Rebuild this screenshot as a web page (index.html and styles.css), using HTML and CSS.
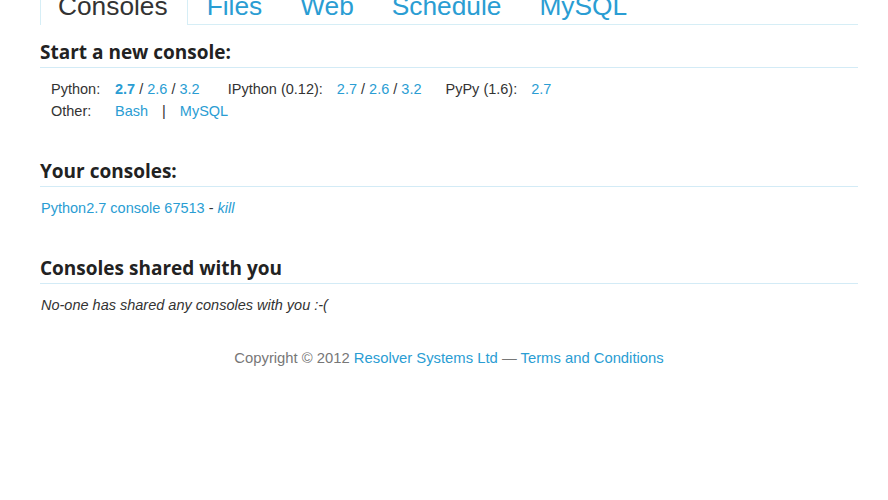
FILE: index.html
```html
<!DOCTYPE html>
<html>
<head>
<meta charset="utf-8">
<title>Consoles</title>
<link rel="stylesheet" href="styles.css">
</head>
<body>
<div class="page">
  <ul class="tabs">
    <li class="tab active">Consoles</li>
    <li class="tab"><a href="#">Files</a></li>
    <li class="tab"><a href="#">Web</a></li>
    <li class="tab"><a href="#">Schedule</a></li>
    <li class="tab"><a href="#">MySQL</a></li>
  </ul>

  <h2 class="section-title first">Start a new console:</h2>
  <div class="launch">
    <div class="launch-row">
      <span class="lbl lbl-python">Python:</span>
      <span class="vals"><a href="#" class="cur">2.7</a> / <a href="#">2.6</a> / <a href="#">3.2</a></span>
      <span class="lbl lbl-ipython">IPython (0.12):</span>
      <span class="vals"><a href="#">2.7</a> / <a href="#">2.6</a> / <a href="#">3.2</a></span>
      <span class="lbl lbl-pypy">PyPy (1.6):</span>
      <span class="vals"><a href="#">2.7</a></span>
    </div>
    <div class="launch-row">
      <span class="lbl lbl-python">Other:</span>
      <span class="vals"><a href="#">Bash</a><span class="pipe">|</span><a href="#">MySQL</a></span>
    </div>
  </div>

  <h2 class="section-title">Your consoles:</h2>
  <p class="item"><a href="#">Python2.7 console 67513</a> - <a href="#" class="kill">kill</a></p>

  <h2 class="section-title">Consoles shared with you</h2>
  <p class="item empty">No-one has shared any consoles with you :-(</p>

  <p class="footer">Copyright © 2012 <a href="#">Resolver Systems Ltd</a> — <a href="#">Terms and Conditions</a></p>
</div>
</body>
</html>
```
FILE: styles.css
```css
html, body {
  margin: 0;
  padding: 0;
  background: #fff;
}
body {
  font-family: "Liberation Sans", Arial, sans-serif;
  font-size: 14.5px;
  color: #333;
}
a {
  color: #2a9dd3;
  text-decoration: none;
}
.page {
  margin-left: 40px;
  width: 818px;
}
.tabs {
  list-style: none;
  margin: 0;
  padding: 0;
  display: flex;
  height: 24px;
  border-bottom: 1px solid #d6eef6;
}
.tab {
  font-size: 26.3px;
  line-height: 12px;
  padding: 0 18px 12px 18px;
  border: 1px solid transparent;
  border-top: none;
  border-bottom: none;
}
.tab.active {
  color: #333;
  border-left-color: #d6eef6;
  border-right-color: #d6eef6;
  background: #fff;
  padding-left: 17px;
  padding-right: 19px;
  height: 13px;
}
.section-title {
  font-family: "Open Sans", sans-serif;
  font-weight: 700;
  font-size: 19px;
  line-height: 24px;
  color: #222;
  margin: 37px 0 0 0;
  padding-bottom: 3px;
  border-bottom: 1px solid #d3ebf6;
}
.section-title.first {
  margin-top: 15px;
}
.launch {
  margin-top: 10px;
  padding-left: 11px;
}
.launch-row {
  display: flex;
  line-height: 22px;
}
.lbl-python {
  width: 64px;
}
.lbl-ipython {
  margin-left: 28px;
  margin-right: 14px;
}
.lbl-pypy {
  margin-left: 24px;
  margin-right: 14px;
}
.cur {
  font-weight: 700;
}
.pipe {
  margin: 0 14px;
}
.item {
  margin: 10px 0 0 1px;
  line-height: 22px;
}
.kill {
  font-style: italic;
}
.empty {
  font-style: italic;
}
.footer {
  margin: 31px 0 0 0;
  text-align: center;
  color: #777;
  font-size: 14.8px;
  line-height: 22px;
}
```
